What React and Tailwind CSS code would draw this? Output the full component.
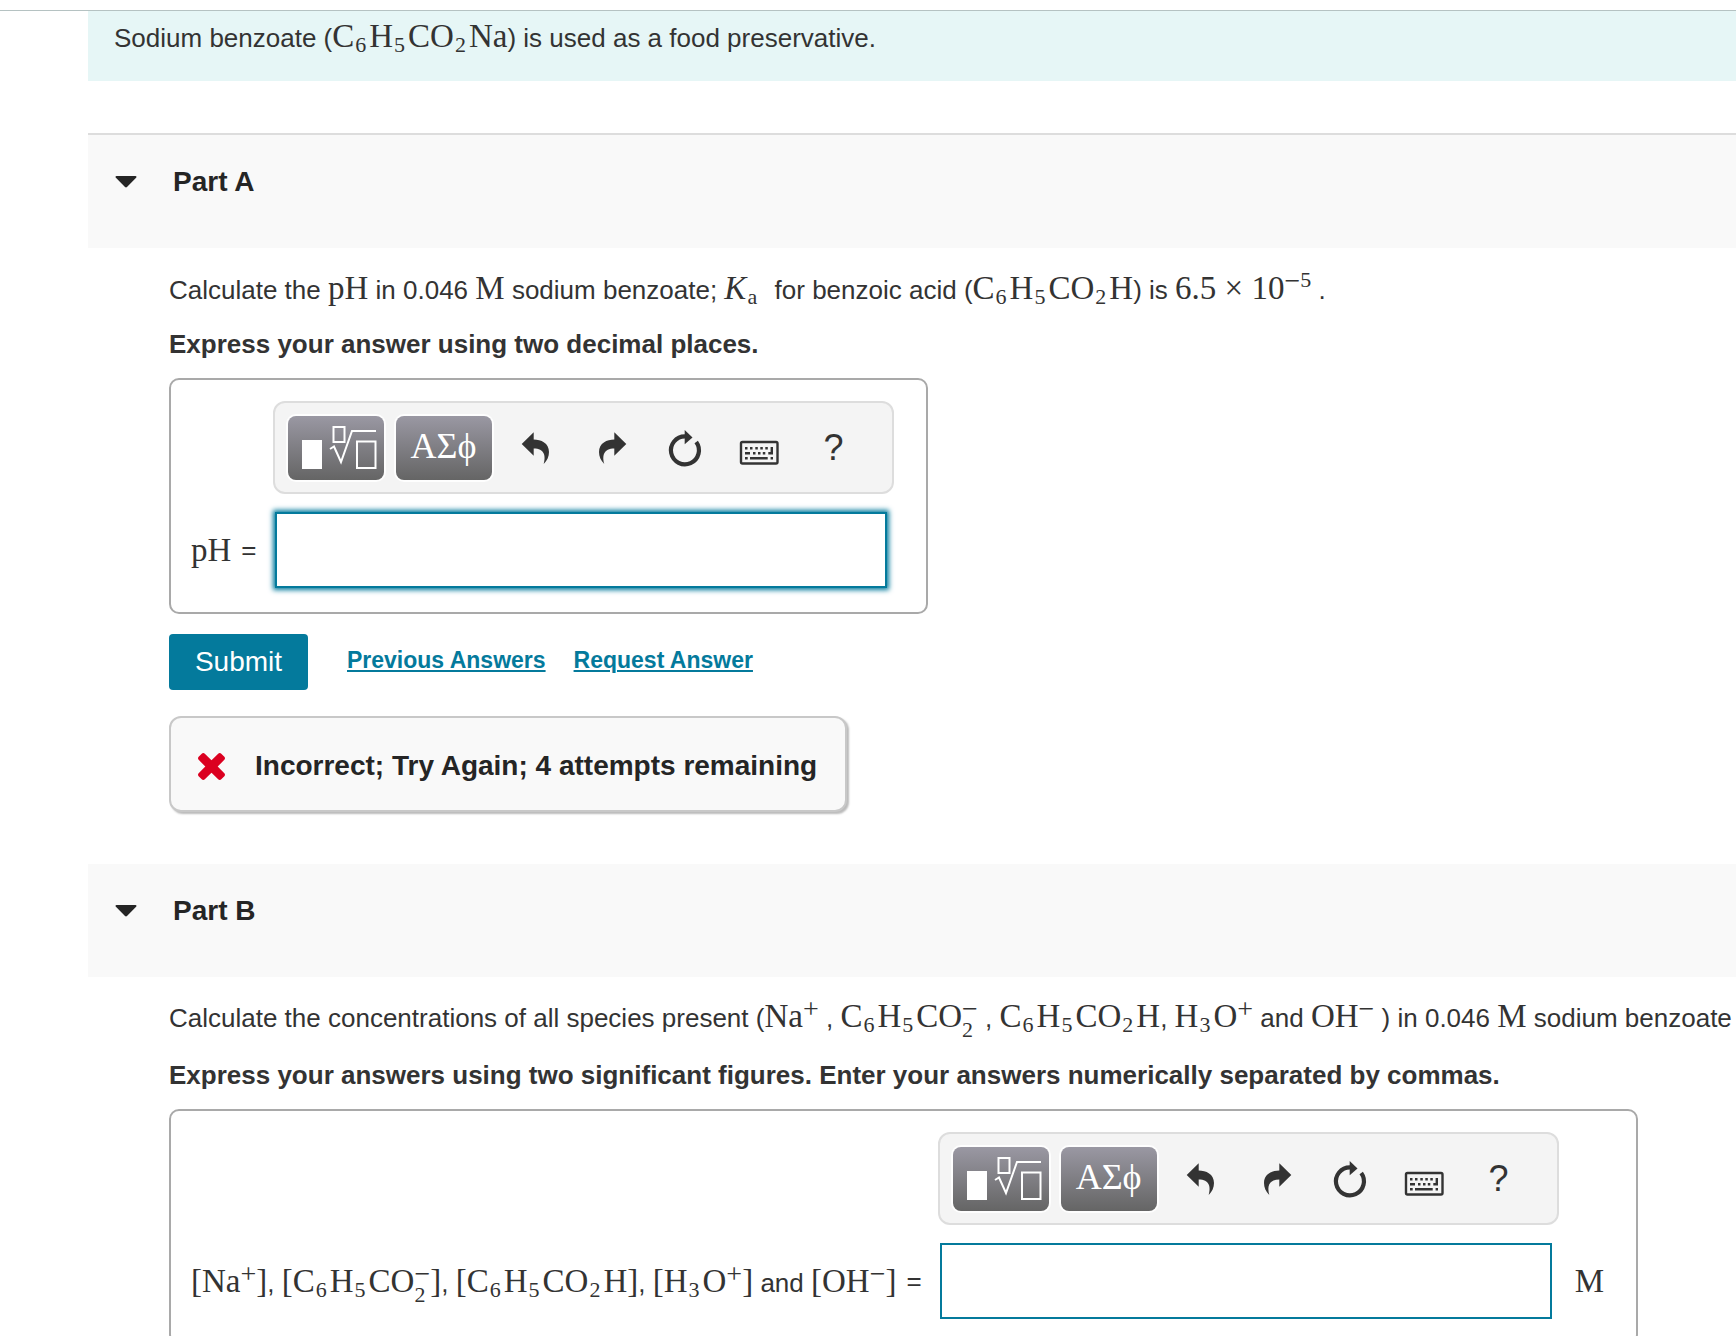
import React from "react";

const Math = ({ children }) => (
  <span className="font-['Liberation_Serif',serif] text-[33px] leading-none">{children}</span>
);
const Sub = ({ children }) => (
  <span className="pr-[3px] pl-px align-[-5px] text-[22px] leading-none">{children}</span>
);
const Sup = ({ children }) => (
  <span className="align-[12px] text-[22px] leading-none">{children}</span>
);
const Sign = ({ children }) => (
  <span className="align-[9px] text-[28px] leading-none">{children}</span>
);
const Benzo = () => (
  <>
    C<Sub>6</Sub>H<Sub>5</Sub>CO
  </>
);
const Acid = () => (
  <>
    <Benzo />
    <Sub>2</Sub>H
  </>
);
const Anion = () => (
  <>
    <Benzo />
    <span className="inline-flex flex-col items-start align-[9px]">
      <span className="text-[28px] leading-[12px]">−</span>
      <span className="mt-[7px] text-[22px] leading-[16px]">2</span>
    </span>
  </>
);

const TemplateIcon = () => (
  <svg width="96" height="64" viewBox="0 0 96 64" fill="none" stroke="#fff" strokeWidth="2" aria-hidden="true">
    <rect x="14" y="24" width="20" height="29" fill="#fff" stroke="none" />
    <rect x="45.5" y="11" width="11" height="15" />
    <path d="M42 33l4-2.5L53 46 64 15h24" />
    <rect x="69" y="25.5" width="18.5" height="26.5" />
  </svg>
);
const arrow =
  "M21.7 28L33.7 16.3V23.5C41 23.5 49 27 49 36C49 40.5 47.2 44.5 43.7 48C46 40 44.5 32.5 33.7 32.5V39.7Z";
const Icon = ({ children }) => (
  <svg width="74" height="64" viewBox="0 0 74 64" fill="#333" aria-hidden="true">
    {children}
  </svg>
);
const KeyboardIcon = () => (
  <Icon>
    <rect x="19" y="26" width="36.5" height="21.5" rx="1.5" fill="none" stroke="#333" strokeWidth="2.4" />
    <path d="M23 31h2.5v2.4H23zM28 31h2.5v2.4H28zM33.3 31h2.5v2.4h-2.5zM38.3 31h2.5v2.4h-2.5zM43.3 31h2.5v2.4h-2.5zM48.6 31H51v7.4h-4.7V36h2.3zM23 36h5v2.4h-5zM31 36h2.5v2.4H31zM36 36h2.5v2.4H36zM40.8 36h2.5v2.4h-2.5zM23 41h2.7v2.5H23zM28 41h17.7v2.5H28zM48.6 41H51v2.5h-2.4z" />
  </Icon>
);
const CrossIcon = () => (
  <svg width="27" height="27" viewBox="302 366 1188 1188" fill="#db0020" aria-hidden="true">
    <path d="M1490 1322q0 40-28 68l-136 136q-28 28-68 28t-68-28l-294-294-294 294q-28 28-68 28t-68-28l-136-136q-28-28-28-68t28-68l294-294-294-294q-28-28-28-68t28-68l136-136q28-28 68-28t68 28l294 294 294-294q28-28 68-28t68 28l136 136q28 28 28 68t-28 68l-294 294 294 294q28 28 28 68z" />
  </svg>
);

const dark =
  "h-16 w-24 rounded-lg bg-linear-to-b from-[#9a98a3] to-[#656565] text-white ring-2 ring-white/90";

const Toolbar = () => (
  <div className="flex h-[93px] w-[621px] items-center gap-3 rounded-xl border-2 border-[#ddd] bg-[#f4f4f4] pl-[13px]">
    <button type="button" aria-label="Templates" className={dark}>
      <TemplateIcon />
    </button>
    <button type="button" aria-label="Symbols" className={`${dark} pb-1 font-['Liberation_Serif',serif] text-4xl leading-none`}>
      ΑΣϕ
    </button>
    <div className="-ml-1 flex">
      <button type="button" aria-label="Undo">
        <Icon><path d={arrow} /></Icon>
      </button>
      <button type="button" aria-label="Redo">
        <Icon><path d={arrow} transform="matrix(-1 0 0 1 74 0)" /></Icon>
      </button>
      <button type="button" aria-label="Reset">
        <Icon>
          <path d="M37 20.3A14 14 0 1 0 48.2 26" fill="none" stroke="#333" strokeWidth="4.2" />
          <path d="M36.7 14L44.5 21.5L36.7 28.3Z" />
        </Icon>
      </button>
      <button type="button" aria-label="Keyboard shortcuts">
        <KeyboardIcon />
      </button>
      <button type="button" aria-label="Help" className="w-[76px] font-['Liberation_Sans',sans-serif] text-4xl leading-none text-[#333]">
        ?
      </button>
    </div>
  </div>
);

const PartHeader = ({ title, className }) => (
  <h2 className={`bg-[#f9f9f9] pt-[31px] ${className}`}>
    <button type="button" className="flex items-center gap-9 pl-[27px] text-[28px] leading-8 font-bold text-[#252525]">
      <svg width="22" height="12" viewBox="0 0 22 12" fill="#252525" aria-hidden="true">
        <path d="M1.5 0h19c1 0 1.3 1 .6 1.7L12 11c-.6.6-1.4.6-2 0L.9 1.700C.2 1 .5 0 1.500 0z" />
      </svg>
      {title}
    </button>
  </h2>
);

const box = "mt-[14px] w-fit rounded-[10px] border-2 border-[#a9a9a9] pt-[21px] pr-8 pb-6 pl-5";
const link = "underline decoration-2 underline-offset-2";

export default function App() {
  return (
    <div className="min-h-screen overflow-x-hidden bg-white pt-[10px] font-['Liberation_Sans',Arial,sans-serif] text-[26px] leading-10 text-[#333]">
      <div className="border-t border-[#b5c2c2]" />
      <main className="ml-[88px]">
        <p className="h-[70px] bg-[#e6f6f6] pt-[7px] pl-[26px] whitespace-nowrap">
          Sodium benzoate (<Math><Benzo /><Sub>2</Sub>Na</Math>) is used as a food preservative.
        </p>

        <PartHeader title="Part A" className="mt-[52px] h-[115px] border-t-2 border-[#ddd]" />
        <section className="pl-[81px] whitespace-nowrap">
          <p className="mt-[19px]">
            Calculate the <Math>pH</Math> in 0.046 <Math>M</Math> sodium benzoate; <Math><i>K</i><Sub>a</Sub></Math>
            {" \u00a0"}for benzoic acid (<Math><Acid /></Math>) is <Math>6.5 × 10<Sign>−</Sign><Sup>5</Sup></Math> .
          </p>
          <p className="mt-[14px] font-bold">Express your answer using two decimal places.</p>
          <div className={box}>
            <div className="grid grid-cols-[auto_auto] gap-x-4 gap-y-[18px]">
              <div className="col-start-2"><Toolbar /></div>
              <label htmlFor="ph" className="flex items-center justify-end gap-[10px]">
                <Math>pH</Math> =
              </label>
              <input id="ph" className="ml-0.5 h-[76px] w-[612px] border-2 border-[#047a9c] px-3 shadow-[0_0_5px_2px_#047a9c] outline-none" />
            </div>
          </div>
          <div className="mt-5 flex items-center">
            <button type="button" className="h-14 w-[139px] rounded bg-[#047a9c] text-[28px] text-white">Submit</button>
            <div className="ml-[39px] flex gap-7 pb-1 text-[23px] font-bold text-[#047a9c]">
              <a href="#previous" className={link}>Previous Answers</a>
              <a href="#request" className={link}>Request Answer</a>
            </div>
          </div>
          <div role="status" className="mt-[26px] flex h-24 w-fit items-center gap-[30px] rounded-xl border-2 border-[#c8c8c8] bg-[#f9f9f9] pt-1 pr-7 pl-[27px] text-[28px] font-bold text-[#252525] shadow-[2px_2px_2px_#bbb]">
            <CrossIcon />
            Incorrect; Try Again; 4 attempts remaining
          </div>
        </section>

        <PartHeader title="Part B" className="mt-[52px] h-[113px]" />
        <section className="pl-[81px] whitespace-nowrap">
          <p className="mt-[18px]">
            Calculate the concentrations of all species present (<Math>Na<Sign>+</Sign></Math> , <Math><Anion /></Math> ,{" "}
            <Math><Acid /></Math>, <Math>H<Sub>3</Sub>O<Sign>+</Sign></Math> and <Math>OH<Sign>−</Sign></Math> ) in 0.046{" "}
            <Math>M</Math> sodium benzoate
          </p>
          <p className="mt-[17px] font-bold">
            Express your answers using two significant figures. Enter your answers numerically separated by commas.
          </p>
          <div className={box}>
            <div className="grid grid-cols-[auto_auto_auto] gap-x-4 gap-y-[18px]">
              <div className="col-start-2 row-start-1"><Toolbar /></div>
              <label htmlFor="conc" className="col-start-1 row-start-2 flex items-center gap-[10px]">
                <span>
                  <Math>[Na<Sign>+</Sign>]</Math>, <Math>[<Anion />]</Math>, <Math>[<Acid />]</Math>,{" "}
                  <Math>[H<Sub>3</Sub>O<Sign>+</Sign>]</Math> and <Math>[OH<Sign>−</Sign>]</Math>
                </span>
                =
              </label>
              <input id="conc" className="col-start-2 row-start-2 ml-0.5 h-[76px] w-[612px] border-2 border-[#047a9c] px-3 outline-none" />
              <span className="col-start-3 row-start-2 flex items-center"><Math>M</Math></span>
            </div>
          </div>
        </section>
      </main>
    </div>
  );
}
